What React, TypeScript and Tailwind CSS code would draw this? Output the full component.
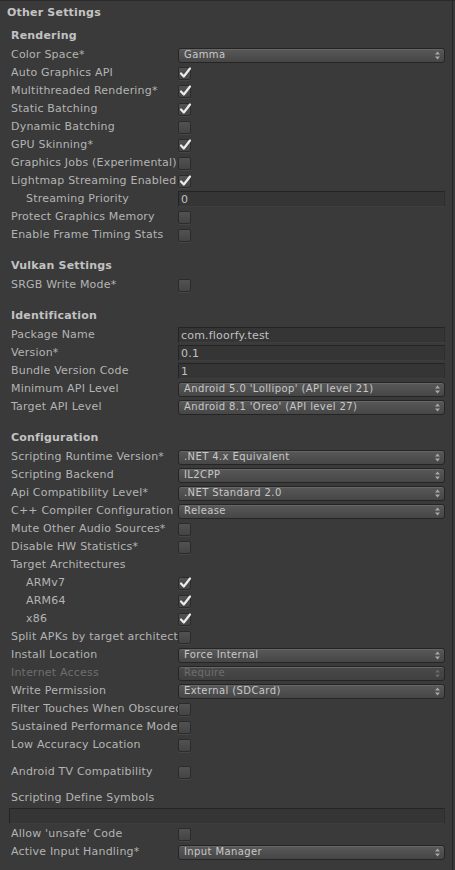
import React from 'react';

const font = { fontFamily: '"DejaVu Sans", Verdana, sans-serif' };

type Field =
  | { kind: 'check'; on: boolean }
  | { kind: 'select'; value: string; disabled?: boolean }
  | { kind: 'text'; value: string }
  | { kind: 'none' };

const Check: React.FC<{ on: boolean }> = ({ on }) => (
  <div className="relative h-[13px] w-[13px]">
    <div className="h-[13px] w-[13px] rounded-[2px] border border-[#2b2b2b] bg-gradient-to-b from-[#525252] to-[#444444] shadow-[0_1px_0_#464646]" />
    {on && (
      <svg className="absolute -top-[1px] left-[1px]" width="14" height="14" viewBox="0 0 14 14">
        <polyline
          points="2,7.5 4.8,10.5 11,2.5"
          fill="none"
          stroke="#ededed"
          strokeWidth="2.2"
          strokeLinecap="round"
          strokeLinejoin="round"
        />
      </svg>
    )}
  </div>
);

const Select: React.FC<{ value: string; disabled?: boolean }> = ({ value, disabled }) => (
  <div
    className={`flex h-[15px] w-full items-center justify-between rounded-[3px] border border-[#252525] pl-[5px] pr-[4px] text-[10px] leading-none tracking-[0.4px] shadow-[inset_0_1px_0_#666666] ${
      disabled
        ? 'bg-gradient-to-b from-[#4a4a4a] to-[#404040] text-[#6e6e6e]'
        : 'bg-gradient-to-b from-[#595959] to-[#464646] text-[#c8c8c8]'
    }`}
  >
    <span className="whitespace-nowrap">{value}</span>
    <svg width="5" height="9" viewBox="0 0 5 9">
      <polygon points="2.5,0.5 5,3.5 0,3.5" fill={disabled ? '#6a6a6a' : '#a8a8a8'} />
      <polygon points="0,5.5 5,5.5 2.5,8.5" fill={disabled ? '#6a6a6a' : '#a8a8a8'} />
    </svg>
  </div>
);

const TextField: React.FC<{ value: string }> = ({ value }) => (
  <div className="flex h-[16px] w-full items-center border border-[#242424] border-b-[#3e3e3e] border-r-[#2e2e2e] bg-[#353535] pl-[2px] text-[11px] leading-none tracking-[0.2px] text-[#c0c0c0]">
    {value}
  </div>
);

const Row: React.FC<{ label: string; field: Field; indent?: boolean; dim?: boolean }> = ({
  label,
  field,
  indent,
  dim,
}) => (
  <div className="flex h-[18px] items-center">
    <div
      className={`w-[178px] shrink-0 overflow-hidden whitespace-nowrap text-[11px] tracking-[0.2px] ${
        indent ? 'pl-[26px]' : 'pl-[11px]'
      } ${dim ? 'text-[#6e6e6e]' : 'text-[#b4b4b4]'}`}
    >
      {label}
    </div>
    <div className="w-[267px]">
      {field.kind === 'check' && <Check on={field.on} />}
      {field.kind === 'select' && <Select value={field.value} disabled={field.disabled} />}
      {field.kind === 'text' && <TextField value={field.value} />}
    </div>
  </div>
);

const Header: React.FC<{ title: string; first?: boolean }> = ({ title, first }) => (
  <div
    className={`flex h-[19px] items-center pl-[11px] text-[11px] font-bold tracking-[0.2px] text-[#c2c2c2] ${
      first ? 'mt-[2px]' : 'mt-[13px]'
    }`}
  >
    {title}
  </div>
);

const on = (v: boolean): Field => ({ kind: 'check', on: v });
const sel = (v: string, disabled?: boolean): Field => ({ kind: 'select', value: v, disabled });
const txt = (v: string): Field => ({ kind: 'text', value: v });

export default function App() {
  return (
    <div
      style={font}
      className="relative h-[870px] w-[455px] overflow-hidden border-t border-[#2a2a2a] bg-[#3a3a3a] pt-[1px]"
    >
      <div className="absolute right-[2px] top-0 h-full w-px bg-[#262626]" />
      <div className="flex h-[23px] items-center pl-[7px] text-[11px] font-bold tracking-[0.2px] text-[#c4c4c4]">
        Other Settings
      </div>

      <Header title="Rendering" first />
      <Row label="Color Space*" field={sel('Gamma')} />
      <Row label="Auto Graphics API" field={on(true)} />
      <Row label="Multithreaded Rendering*" field={on(true)} />
      <Row label="Static Batching" field={on(true)} />
      <Row label="Dynamic Batching" field={on(false)} />
      <Row label="GPU Skinning*" field={on(true)} />
      <Row label="Graphics Jobs (Experimental)" field={on(false)} />
      <Row label="Lightmap Streaming Enabled" field={on(true)} />
      <Row label="Streaming Priority" field={txt('0')} indent />
      <Row label="Protect Graphics Memory" field={on(false)} />
      <Row label="Enable Frame Timing Stats" field={on(false)} />

      <Header title="Vulkan Settings" />
      <Row label="SRGB Write Mode*" field={on(false)} />

      <Header title="Identification" />
      <Row label="Package Name" field={txt('com.floorfy.test')} />
      <Row label="Version*" field={txt('0.1')} />
      <Row label="Bundle Version Code" field={txt('1')} />
      <Row label="Minimum API Level" field={sel("Android 5.0 'Lollipop' (API level 21)")} />
      <Row label="Target API Level" field={sel("Android 8.1 'Oreo' (API level 27)")} />

      <Header title="Configuration" />
      <Row label="Scripting Runtime Version*" field={sel('.NET 4.x Equivalent')} />
      <Row label="Scripting Backend" field={sel('IL2CPP')} />
      <Row label="Api Compatibility Level*" field={sel('.NET Standard 2.0')} />
      <Row label="C++ Compiler Configuration" field={sel('Release')} />
      <Row label="Mute Other Audio Sources*" field={on(false)} />
      <Row label="Disable HW Statistics*" field={on(false)} />
      <Row label="Target Architectures" field={{ kind: 'none' }} />
      <Row label="ARMv7" field={on(true)} indent />
      <Row label="ARM64" field={on(true)} indent />
      <Row label="x86" field={on(true)} indent />
      <Row label="Split APKs by target architecture" field={on(false)} />
      <Row label="Install Location" field={sel('Force Internal')} />
      <Row label="Internet Access" field={sel('Require', true)} dim />
      <Row label="Write Permission" field={sel('External (SDCard)')} />
      <Row label="Filter Touches When Obscured" field={on(false)} />
      <Row label="Sustained Performance Mode" field={on(false)} />
      <Row label="Low Accuracy Location" field={on(false)} />

      <div className="mt-[9px]">
        <Row label="Android TV Compatibility" field={on(false)} />
      </div>

      <div className="mt-[8px] flex h-[18px] items-center pl-[11px] text-[11px] tracking-[0.2px] text-[#b4b4b4]">
        Scripting Define Symbols
      </div>
      <div className="flex h-[18px] items-center pl-[9px]">
        <div className="w-[436px]">
          <TextField value="" />
        </div>
      </div>
      <Row label="Allow 'unsafe' Code" field={on(false)} />
      <Row label="Active Input Handling*" field={sel('Input Manager')} />
    </div>
  );
}
